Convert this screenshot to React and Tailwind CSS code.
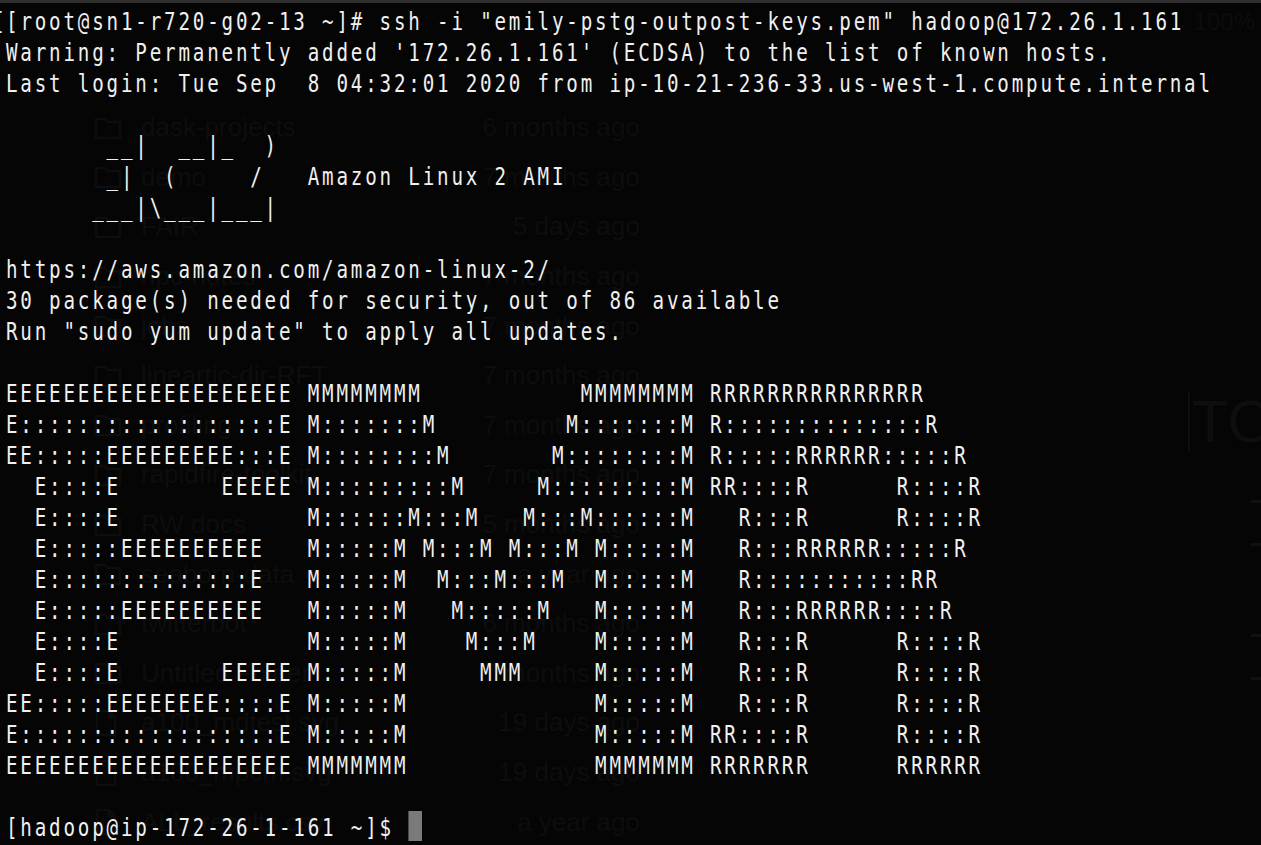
const lines = [
  null,
  "Warning: Permanently added '172.26.1.161' (ECDSA) to the list of known hosts.",
  "Last login: Tue Sep  8 04:32:01 2020 from ip-10-21-236-33.us-west-1.compute.internal",
  "",
  "       __|  __|_  )",
  "       _|  (     /   Amazon Linux 2 AMI",
  "      ___|\\___|___|",
  "",
  "https://aws.amazon.com/amazon-linux-2/",
  "30 package(s) needed for security, out of 86 available",
  'Run "sudo yum update" to apply all updates.',
  "",
  "EEEEEEEEEEEEEEEEEEEE MMMMMMMM           MMMMMMMM RRRRRRRRRRRRRRR",
  "E::::::::::::::::::E M:::::::M         M:::::::M R::::::::::::::R",
  "EE:::::EEEEEEEEE:::E M::::::::M       M::::::::M R:::::RRRRRR:::::R",
  "  E::::E       EEEEE M:::::::::M     M:::::::::M RR::::R      R::::R",
  "  E::::E             M::::::M:::M   M:::M::::::M   R:::R      R::::R",
  "  E:::::EEEEEEEEEE   M:::::M M:::M M:::M M:::::M   R:::RRRRRR:::::R",
  "  E::::::::::::::E   M:::::M  M:::M:::M  M:::::M   R:::::::::::RR",
  "  E:::::EEEEEEEEEE   M:::::M   M:::::M   M:::::M   R:::RRRRRR::::R",
  "  E::::E             M:::::M    M:::M    M:::::M   R:::R      R::::R",
  "  E::::E       EEEEE M:::::M     MMM     M:::::M   R:::R      R::::R",
  "EE:::::EEEEEEEE::::E M:::::M             M:::::M   R:::R      R::::R",
  "E::::::::::::::::::E M:::::M             M:::::M RR::::R      R::::R",
  "EEEEEEEEEEEEEEEEEEEE MMMMMMM             MMMMMMM RRRRRRR      RRRRRR",
  "",
]

// faint file list of the window behind the translucent terminal
const ghostRows = [
  { name: "dask-projects", date: "6 months ago", file: false },
  { name: "demo", date: "7 months ago", file: false },
  { name: "FAIR", date: "5 days ago", file: false },
  { name: "hpc-notes", date: "7 months ago", file: false },
  { name: "jobs", date: "7 months ago", file: false },
  { name: "lineartic-dir-RFT", date: "7 months ago", file: false },
  { name: "profiling", date: "7 months ago", file: false },
  { name: "rapidfire-toolkit", date: "7 months ago", file: false },
  { name: "RW docs", date: "5 months ago", file: false },
  { name: "seaborn-data", date: "a year ago", file: false },
  { name: "twitterbot", date: "6 months ago", file: false },
  { name: "Untitled Folder", date: "7 months ago", file: false },
  { name: "a100_mdtest.svg", date: "19 days ago", file: true },
  { name: "a100_mpcm.svg", date: "19 days ago", file: true },
  { name: "ALL_results.csv", date: "a year ago", file: true },
]

const GhostIcon = ({ file }) =>
  file ? (
    <svg width="24" height="28" viewBox="0 0 24 28" fill="none" stroke="#0d0d0d" strokeWidth="2.5">
      <path d="M3 2h12l6 6v18H3z" />
      <path d="M15 2v6h6" />
    </svg>
  ) : (
    <svg width="28" height="24" viewBox="0 0 28 24" fill="none" stroke="#0d0d0d" strokeWidth="2.5">
      <path d="M2 3h9l3 3h12v16H2z" />
    </svg>
  )

const Ghost = () => (
  <div className="absolute inset-0 pointer-events-none" style={{ fontFamily: '"Liberation Sans", Arial, sans-serif' }}>
    <div className="pt-[103px] pl-[94px] w-[640px] flex flex-col">
      {ghostRows.map((r, i) => (
        <div key={i} className="h-[49.6px] flex items-center text-[26px] text-[#0d0d0d]">
          <div className="w-[47px] flex items-center">
            <GhostIcon file={r.file} />
          </div>
          <div className="flex-1 truncate">{r.name}</div>
          <div className="text-right">{r.date}</div>
        </div>
      ))}
    </div>
    <div className="absolute left-[1188px] top-[392px] text-[60px] leading-none text-[#0e0e0e] border-l-2 border-[#0e0e0e] pl-[2px]">
      TOI
    </div>
    <div className="absolute right-[6px] top-[4px] text-[24px] text-[#0c0c0c]">100%</div>
    <div className="absolute right-0 top-[500px] flex flex-col gap-[40px]">
      <div className="w-[10px] h-[3px] bg-[#101010]" />
      <div className="w-[10px] h-[3px] bg-[#101010]" />
      <div className="w-[10px] h-[3px] bg-[#101010] mt-[48px]" />
      <div className="w-[10px] h-[3px] bg-[#101010]" />
    </div>
  </div>
)

const Line = ({ children }) => (
  <div className="h-[31px] leading-[31px] whitespace-pre">{children}</div>
)

export default function App() {
  return (
    <div className="relative w-[1261px] h-[845px] overflow-hidden bg-[#050505]">
      <Ghost />
      <div className="relative h-[3px] bg-[#2e2e2e]" />
      <div className="relative pt-[4px] pl-[6px]">
        <div
          className="w-max origin-left scale-x-[0.8] text-[24px] tracking-[3.51px] text-[#f0f0f0]"
          style={{ fontFamily: '"DejaVu Sans Mono", "Liberation Mono", monospace' }}
        >
          {lines.map((l, i) =>
            l === null ? (
              <Line key={i}>
                <span className="-ml-[16px] -mr-[1.96px]">[</span>
                {'[root@sn1-r720-g02-13 ~]# ssh -i "emily-pstg-outpost-keys.pem" hadoop@172.26.1.161'}
              </Line>
            ) : (
              <Line key={i}>{l}</Line>
            )
          )}
          <Line>
            {"[hadoop@ip-172-26-1-161 ~]$ "}
            <span className="inline-block align-top w-[17.5px] h-[30px] bg-[#7a7a7a] -mt-[2px]" />
          </Line>
        </div>
      </div>
    </div>
  )
}
